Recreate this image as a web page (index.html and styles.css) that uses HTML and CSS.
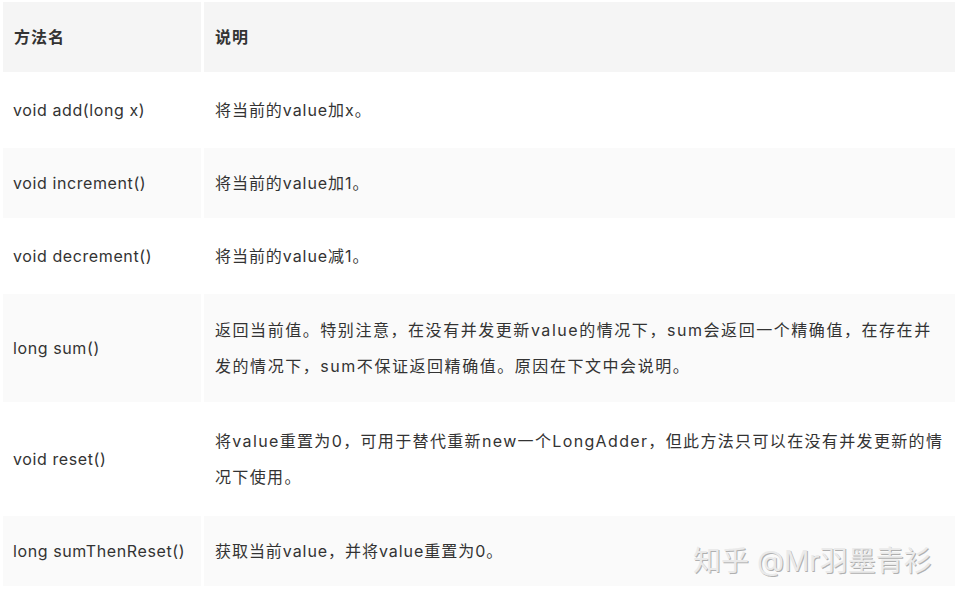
FILE: index.html
```html
<!DOCTYPE html>
<html>
<head>
  <meta charset="utf-8">
  <title>LongAdder 方法</title>
  <link rel="stylesheet" href="styles.css">
</head>
<body>
  <div class="page">
    <table class="method-table">
      <thead>
        <tr>
          <th class="col-name">方法名</th>
          <th>说明</th>
        </tr>
      </thead>
      <tbody>
        <tr>
          <td>void add(long x)</td>
          <td>将当前的value加x。</td>
        </tr>
        <tr>
          <td>void increment()</td>
          <td>将当前的value加1。</td>
        </tr>
        <tr>
          <td>void decrement()</td>
          <td>将当前的value减1。</td>
        </tr>
        <tr class="tall">
          <td>long sum()</td>
          <td>返回当前值。特别注意，在没有并发更新value的情况下，sum会返回一个精确值，在存在并<br>发的情况下，sum不保证返回精确值。原因在下文中会说明。</td>
        </tr>
        <tr class="tall tight">
          <td>void reset()</td>
          <td>将value重置为0，可用于替代重新new一个LongAdder，但此方法只可以在没有并发更新的情<br>况下使用。</td>
        </tr>
        <tr>
          <td>long sumThenReset()</td>
          <td>获取当前value，并将value重置为0。</td>
        </tr>
      </tbody>
    </table>
    <div class="watermark">知乎 @Mr羽墨青衫</div>
  </div>
</body>
</html>
```

FILE: styles.css
```css
body {
  margin: 0;
  background: #fff;
  font-family: Inter, "Noto Sans CJK SC", sans-serif;
  color: #333;
}
.page {
  position: relative;
  width: 958px;
  height: 599px;
  overflow: hidden;
}
.method-table {
  width: 958px;
  border-collapse: separate;
  border-spacing: 3px;
  margin-top: -1px;
  font-size: 16px;
  letter-spacing: 0.95px;
}
.method-table th,
.method-table td {
  text-align: left;
  vertical-align: middle;
  padding: 17px 11px;
  line-height: 36px;
}
.method-table th {
  background: #f5f5f5;
  font-weight: bold;
}
.method-table .col-name {
  width: 176px;
}
.method-table td:first-child {
  padding-left: 10px;
  letter-spacing: 0.6px;
}
.method-table tr.tall td {
  padding-top: 18px;
  padding-bottom: 18px;
}
.method-table tr.tall td:last-child {
  letter-spacing: 1.55px;
  white-space: nowrap;
}
.method-table tr.tight td:last-child {
  letter-spacing: 1.35px;
}
.method-table tbody tr:nth-child(even) td {
  background: #fafafa;
}
.watermark {
  position: absolute;
  left: 693px;
  top: 539px;
  font-size: 28px;
  color: #eaeaea;
  text-shadow: 1px 1px 0 #b0b0b0;
  white-space: nowrap;
}
```
